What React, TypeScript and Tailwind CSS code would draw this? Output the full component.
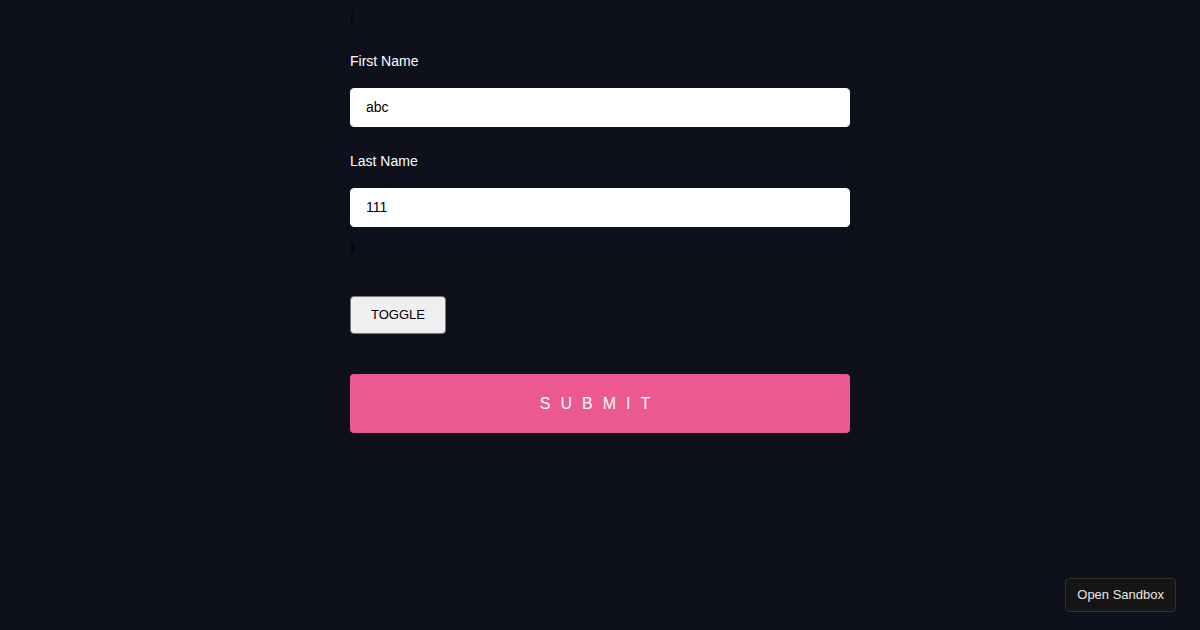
import { useState } from "react";

const App = () => {
  const [show, setShow] = useState(true);
  const [first, setFirst] = useState("abc");
  const [last, setLast] = useState("111");

  return (
    <div
      className="min-h-screen bg-[#0e101c] text-black"
      style={{ fontFamily: '"Liberation Sans", Arial, sans-serif' }}
    >
      <form className="w-[500px] mx-auto" onSubmit={(e) => e.preventDefault()}>
        <div className="pt-[8px] text-[14px] leading-[19px]">(</div>
        {show && (
          <>
            <label className="block mt-[20px] mb-[13px] text-[14px] leading-[28px] text-white font-light">
              First Name
            </label>
            <input
              className="block w-full h-[39px] px-[15px] pb-[1px] mb-[10px] rounded-[4px] border border-white bg-white text-[14px] text-black outline-none"
              value={first}
              onChange={(e) => setFirst(e.target.value)}
            />
            <label className="block mt-[20px] mb-[13px] text-[14px] leading-[28px] text-white font-light">
              Last Name
            </label>
            <input
              className="block w-full h-[39px] px-[15px] pb-[1px] mb-[10px] rounded-[4px] border border-white bg-white text-[14px] text-black outline-none"
              value={last}
              onChange={(e) => setLast(e.target.value)}
            />
          </>
        )}
        <div className="text-[14px] leading-[20px]">)</div>
        <button
          type="button"
          className="block mt-[39px] h-[38px] px-[20px] rounded-[4px] border border-[#767676] bg-[#efefef] text-[13px] uppercase text-black"
          onClick={() => setShow(!show)}
        >
          Toggle
        </button>
        <button
          type="submit"
          className="block w-full mt-[40px] h-[59px] rounded-[4px] bg-[#ec5990] text-white text-[16px] font-thin uppercase tracking-[10px]"
        >
          Submit
        </button>
      </form>

      <button className="fixed right-[24px] bottom-[18px] h-[34px] px-[11px] rounded-[4px] border border-[#333] bg-[#151515] text-[13px] text-[#e8e8e8]">
        Open Sandbox
      </button>
    </div>
  );
};

export default App;
